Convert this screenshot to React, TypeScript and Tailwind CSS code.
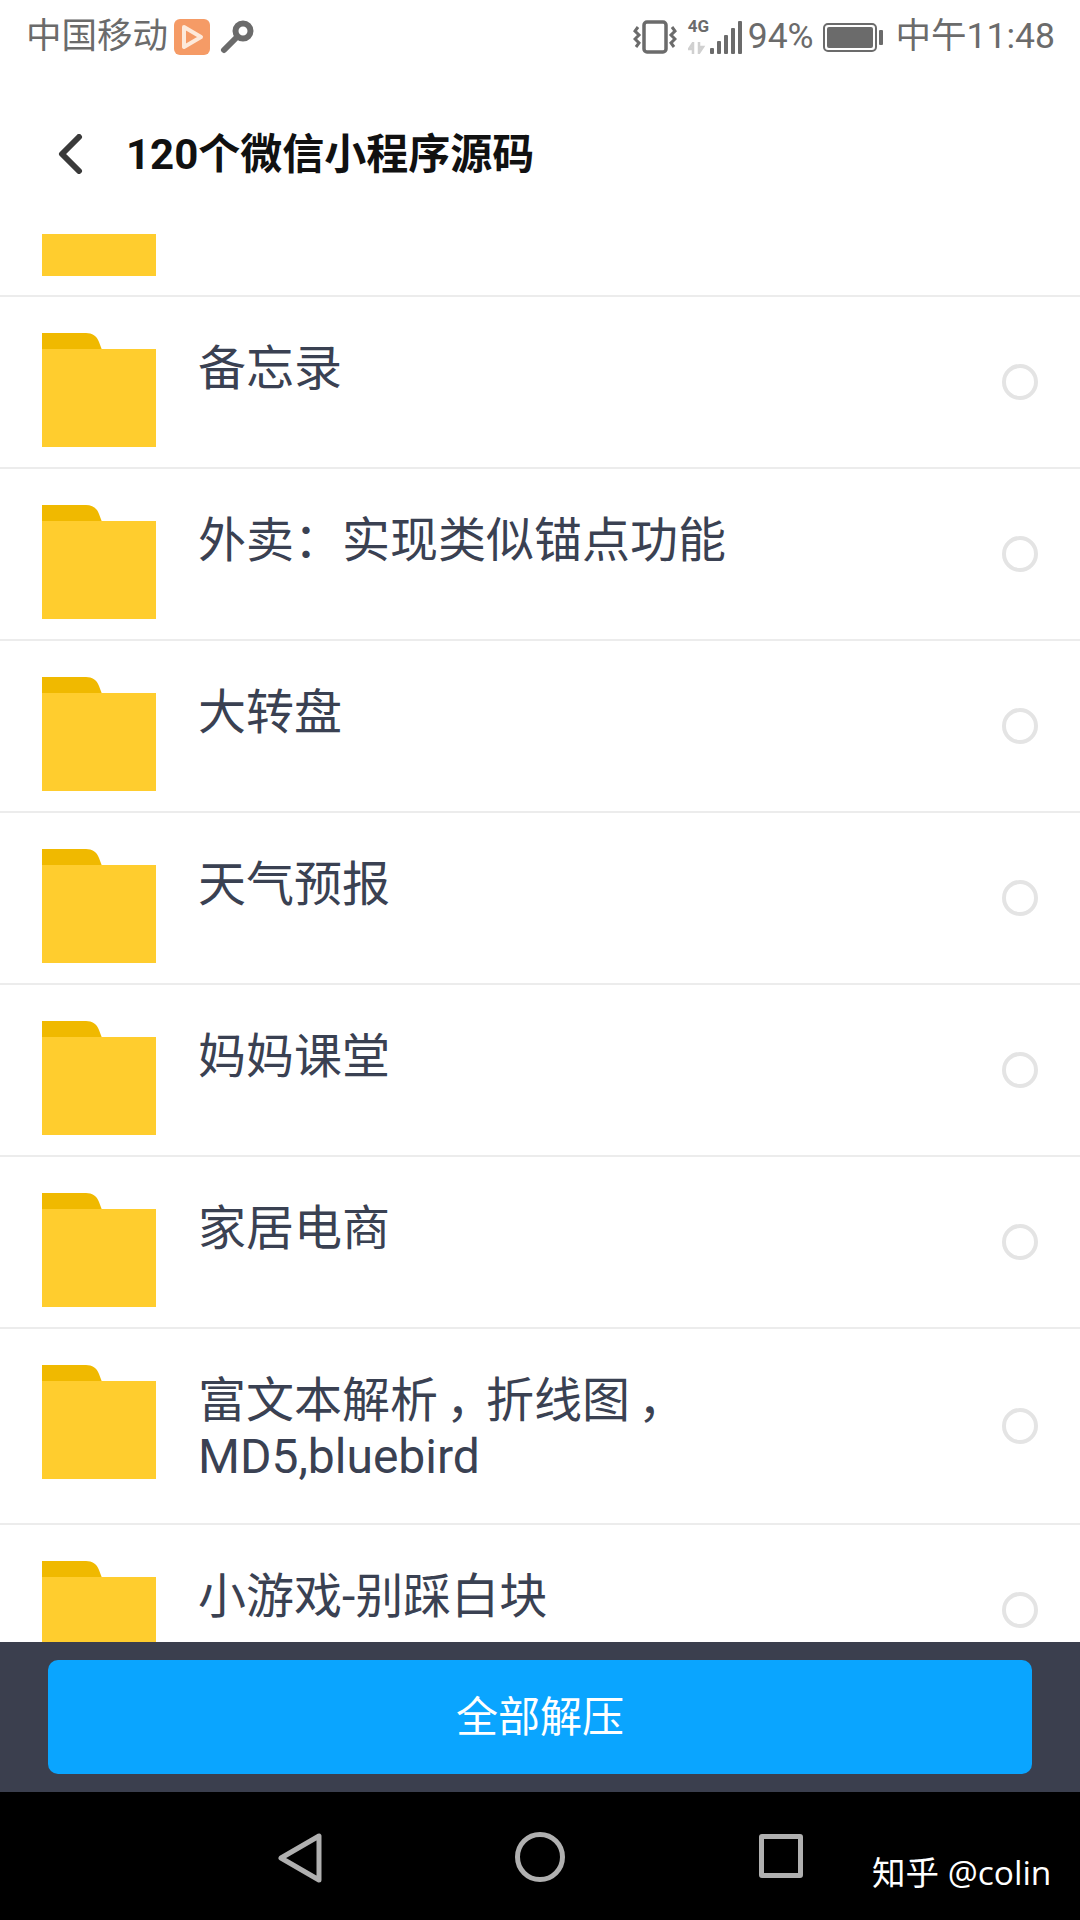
const FONT = "font-['Roboto','Noto_Sans_CJK_SC',sans-serif]"

const ROWS: { name: string[]; height: string }[] = [
  { name: ['备忘录'], height: 'h-[172px]' },
  { name: ['外卖：实现类似锚点功能'], height: 'h-[172px]' },
  { name: ['大转盘'], height: 'h-[172px]' },
  { name: ['天气预报'], height: 'h-[172px]' },
  { name: ['妈妈课堂'], height: 'h-[172px]' },
  { name: ['家居电商'], height: 'h-[172px]' },
  { name: ['富文本解析，折线图，', 'MD5,bluebird'], height: 'h-[196px]' },
  { name: ['小游戏-别踩白块'], height: 'h-[172px]' },
]

function Folder() {
  return (
    <svg width="114" height="114" viewBox="0 0 114 114" className="shrink-0">
      <path d="M0 0H44C50 0 55 3 57 9L60 17H0Z" fill="#f0b900" />
      <rect x="0" y="16" width="114" height="98" fill="#ffcd2e" />
    </svg>
  )
}

// commas sit further right in their cell than the CJK font draws them
function Line({ text }: { text: string }) {
  return (
    <div>
      {text.split(/(，)/).map((part, i) =>
        part === '，' ? (
          <span key={i} className="ml-[8px] tracking-[-8px]">
            {part}
          </span>
        ) : (
          part
        ),
      )}
    </div>
  )
}

function FileRow({ name, height }: { name: string[]; height: string }) {
  return (
    <div className={`flex ${height} shrink-0 border-b-2 border-[#ececec] pl-[42px] pr-[42px]`}>
      <div className="pt-[36px]">
        <Folder />
      </div>
      <div className="ml-[42px] pt-[44px] text-[48px] leading-[56px] text-[#3a4152]">
        {name.map(line => (
          <Line key={line} text={line} />
        ))}
      </div>
      <div className="ml-auto size-[36px] self-center rounded-full border-[4px] border-[#e4e4e4]" />
    </div>
  )
}

function StatusBar() {
  return (
    <div className="flex h-[74px] shrink-0 items-center justify-between pl-[26px] pr-[25px] text-[35.5px] text-[#6b6b6b]">
      <div className="flex items-center">
        <span>中国移动</span>
        <svg width="36" height="36" viewBox="0 0 36 36" className="ml-[6px]">
          <rect width="36" height="36" rx="6" fill="#f59b66" />
          <path d="M10 8L27 18L10 28Z" fill="none" stroke="#fdeadb" strokeWidth="4" strokeLinejoin="round" />
        </svg>
        <svg width="34" height="34" viewBox="0 0 34 34" className="ml-[10px]">
          <circle cx="23" cy="11" r="7.5" fill="none" stroke="#6b6b6b" strokeWidth="6" />
          <path d="M17 17L4 30" stroke="#6b6b6b" strokeWidth="6" strokeLinecap="round" />
        </svg>
      </div>
      <div className="flex items-center">
        <svg width="44" height="34" viewBox="0 0 44 34">
          <rect x="11" y="2" width="22" height="30" rx="3" fill="none" stroke="#6b6b6b" strokeWidth="3.5" />
          <path d="M5 7L2 11L6 15L2 19L6 23L3 27" fill="none" stroke="#6b6b6b" strokeWidth="3" />
          <path d="M39 7L42 11L38 15L42 19L38 23L41 27" fill="none" stroke="#6b6b6b" strokeWidth="3" />
        </svg>
        <div className="relative ml-[11px] h-[34px] w-[54px]">
          <span className="absolute left-0 top-[-3px] text-[17px] leading-[18px] font-bold">4G</span>
          <svg width="18" height="12" viewBox="0 0 18 12" className="absolute bottom-0 left-0">
            <path d="M5 12V1L1 7H5M11 0V11L15 5H11" fill="none" stroke="#d0d0d0" strokeWidth="2.5" />
          </svg>
          <div className="absolute bottom-0 right-0 flex items-end gap-[3px]">
            <div className="h-[6px] w-[4px] rounded-[1px] bg-[#6b6b6b]" />
            <div className="h-[13px] w-[4px] rounded-[1px] bg-[#6b6b6b]" />
            <div className="h-[19px] w-[4px] rounded-[1px] bg-[#6b6b6b]" />
            <div className="h-[26px] w-[4px] rounded-[1px] bg-[#6b6b6b]" />
            <div className="h-[33px] w-[4px] rounded-[1px] bg-[#6b6b6b]" />
          </div>
        </div>
        <span className="ml-[6px]">94%</span>
        <div className="ml-[9px] flex items-center">
          <div className="flex h-[29px] w-[54px] rounded-[5px] border-2 border-[#6b6b6b] p-[2px]">
            <div className="flex-1 rounded-[2px] bg-[#6b6b6b]" />
          </div>
          <div className="ml-[2px] h-[15px] w-[4px] rounded-[1px] bg-[#6b6b6b]" />
        </div>
        <span className="ml-[13px]">中午11:48</span>
      </div>
    </div>
  )
}

export default function App() {
  return (
    <div className={`flex h-[1920px] w-[1080px] flex-col overflow-hidden bg-white ${FONT}`}>
      <StatusBar />

      <header className="flex h-[160px] shrink-0 items-center pl-[57px]">
        <svg width="26" height="40" viewBox="0 0 26 40">
          <path d="M22 3L5 20L22 37" fill="none" stroke="#3a3a3a" strokeWidth="6" strokeLinecap="round" strokeLinejoin="round" />
        </svg>
        <h1 className="ml-[43px] text-[42px] font-bold text-[#111111]">120个微信小程序源码</h1>
      </header>

      <div className="flex min-h-0 flex-1 flex-col overflow-hidden">
        <div className="h-[63px] shrink-0 border-b-2 border-[#ececec] pl-[42px]">
          <div className="h-[42px] w-[114px] bg-[#ffcd2e]" />
        </div>
        {ROWS.map(row => (
          <FileRow key={row.name[0]} name={row.name} height={row.height} />
        ))}
      </div>

      <div className="flex h-[150px] shrink-0 items-start bg-[#3b3f4e] px-[48px] pt-[18px]">
        <button className="flex h-[114px] w-full items-center justify-center rounded-[10px] bg-[#0aa5ff] text-[42px] text-white">
          全部解压
        </button>
      </div>

      <div className="relative flex h-[128px] shrink-0 items-start bg-black pt-[40px]">
        <svg width="46" height="52" viewBox="0 0 46 52" className="ml-[277px]">
          <path d="M42 4V48L4 26Z" fill="none" stroke="#b0b0b0" strokeWidth="5" strokeLinejoin="round" />
        </svg>
        <svg width="50" height="50" viewBox="0 0 50 50" className="ml-[192px]">
          <circle cx="25" cy="25" r="22.5" fill="none" stroke="#b0b0b0" strokeWidth="5" />
        </svg>
        <div className="ml-[194px] mt-[2px] size-[44px] rounded-[3px] border-[5px] border-[#b0b0b0]" />
        <span className="absolute left-[872px] top-[60px] font-['Open_Sans','Noto_Sans_CJK_SC',sans-serif] text-[33.5px] leading-[40px] text-white">
          知乎 @colin
        </span>
      </div>
    </div>
  )
}
